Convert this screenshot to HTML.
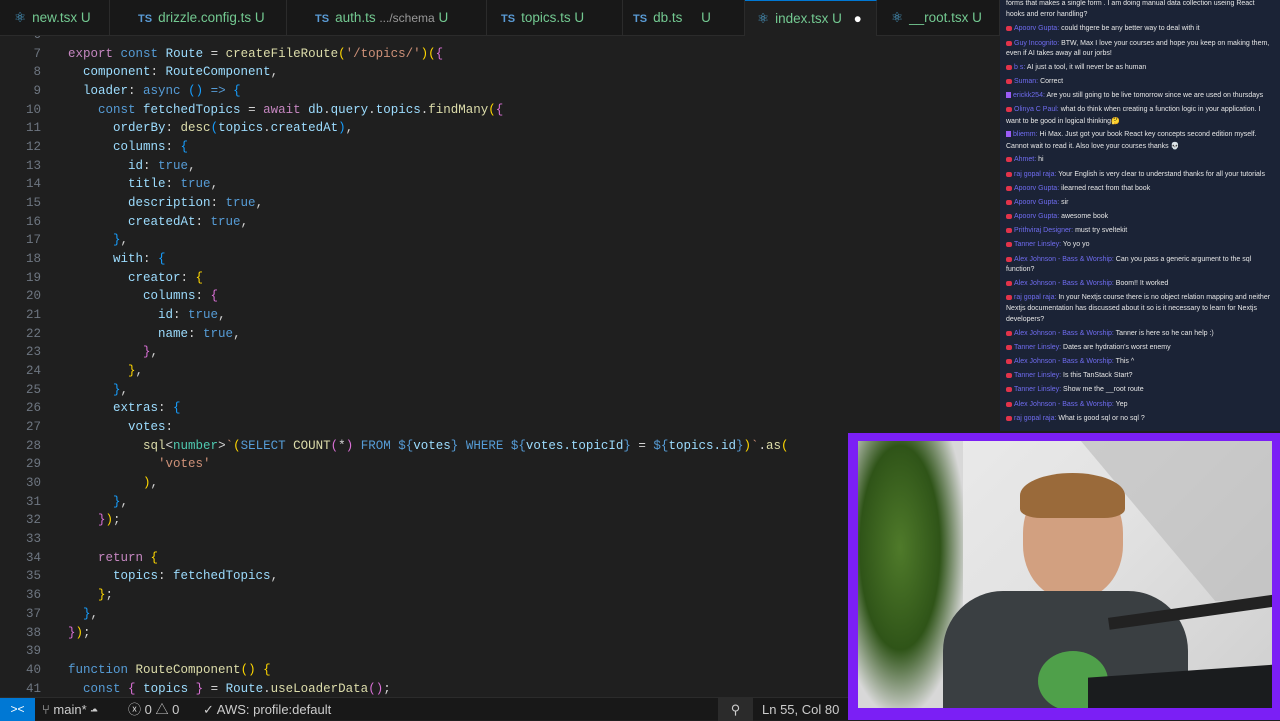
<!DOCTYPE html>
<html><head><meta charset="utf-8"><style>
*{margin:0;padding:0;box-sizing:border-box}
body{width:1280px;height:720px;overflow:hidden;background:#1f1f1f;position:relative;font-family:"Liberation Sans",sans-serif}
.tabs{position:absolute;left:0;top:0;width:1000px;height:36px;background:#181818;border-bottom:1px solid #2b2b2b;z-index:2}
.tab{position:absolute;top:0;height:36px;line-height:36px;font-size:13.5px;color:#73c991;border-right:1px solid #2b2b2b;white-space:nowrap}
.tab .ic{color:#5a9bd5;font-size:11px;margin-right:6px;font-weight:bold}
.tab .r{color:#4fa8d8;margin-right:6px}
.code{position:absolute;left:0;top:26px;width:1000px;font-family:"Liberation Mono",monospace;font-size:12.5px}
.ln{height:18.68px;line-height:18.68px;white-space:pre;position:relative}
.ln .n{position:absolute;left:0;width:41px;text-align:right;color:#6e7681}
.ln .c{position:absolute;left:68px;color:#d4d4d4}
.k{color:#c586c0}.b{color:#569cd6}.f{color:#dcdcaa}.v{color:#9cdcfe}.s{color:#ce9178}.t{color:#4ec9b0}
.p1{color:#ffd700}.p2{color:#da70d6}.p3{color:#179fff}.w{color:#d4d4d4}
.status{position:absolute;left:0;top:697px;width:848px;height:23px;background:#181818;color:#ccc;font-size:13px;line-height:23px;border-top:1px solid #2b2b2b}
.chat{position:absolute;left:1000px;top:0;width:280px;height:431px;background:#1b2336;font-size:7px;color:#e6e6e6}
.cl{position:absolute;left:6px;white-space:nowrap}
.u{color:#6f6cf0}
.dot{display:inline-block;width:6px;height:5px;background:#e0334a;border-radius:2px;margin-right:2px;vertical-align:-1px}
.dp{display:inline-block;width:5px;height:6px;background:#9b5cf6;margin-right:2px;vertical-align:-1px}
.cam{position:absolute;left:848px;top:433px;width:432px;height:287px;background:#7b1ff5}
.img{position:absolute;left:10px;top:8px;width:414px;height:267px;overflow:hidden;background:linear-gradient(135deg,#ececec 0%,#e2e2e2 50%,#cfcfcf 100%)}
</style></head><body>
<div class="tabs">
<div class="tab" style="left:0;width:110px;padding-left:14px"><span class="r">⚛</span>new.tsx U</div>
<div class="tab" style="left:110px;width:177px;padding-left:28px"><span class="ic">TS</span>drizzle.config.ts U</div>
<div class="tab" style="left:287px;width:200px;padding-left:28px"><span class="ic">TS</span>auth.ts <span style="color:#999;font-size:12px">.../schema</span> U</div>
<div class="tab" style="left:487px;width:136px;padding-left:14px"><span class="ic">TS</span>topics.ts U</div>
<div class="tab" style="left:623px;width:122px;padding-left:10px"><span class="ic">TS</span>db.ts &nbsp;&nbsp;&nbsp;&nbsp;U</div>
<div class="tab" style="left:745px;width:132px;padding-left:12px;background:#1f1f1f;border-top:1px solid #0078d4"><span class="r">⚛</span>index.tsx U <span style="color:#fff;margin-left:8px">●</span></div>
<div class="tab" style="left:877px;width:123px;padding-left:14px"><span class="r">⚛</span>__root.tsx U</div>
</div>
<div class="code">
<div class="ln"><span class="n">6</span></div>
<div class="ln"><span class="n">7</span><span class="c"><span class="k">export</span> <span class="b">const</span> <span class="v">Route</span> = <span class="f">createFileRoute</span><span class="p1">(</span><span class="s">'/topics/'</span><span class="p1">)(</span><span class="p2">{</span></span></div>
<div class="ln"><span class="n">8</span><span class="c">  <span class="v">component</span>: <span class="v">RouteComponent</span>,</span></div>
<div class="ln"><span class="n">9</span><span class="c">  <span class="v">loader</span>: <span class="b">async</span> <span class="p3">()</span> <span class="b">=&gt;</span> <span class="p3">{</span></span></div>
<div class="ln"><span class="n">10</span><span class="c">    <span class="b">const</span> <span class="v">fetchedTopics</span> = <span class="k">await</span> <span class="v">db</span>.<span class="v">query</span>.<span class="v">topics</span>.<span class="f">findMany</span><span class="p1">(</span><span class="p2">{</span></span></div>
<div class="ln"><span class="n">11</span><span class="c">      <span class="v">orderBy</span>: <span class="f">desc</span><span class="p3">(</span><span class="v">topics</span>.<span class="v">createdAt</span><span class="p3">)</span>,</span></div>
<div class="ln"><span class="n">12</span><span class="c">      <span class="v">columns</span>: <span class="p3">{</span></span></div>
<div class="ln"><span class="n">13</span><span class="c">        <span class="v">id</span>: <span class="b">true</span>,</span></div>
<div class="ln"><span class="n">14</span><span class="c">        <span class="v">title</span>: <span class="b">true</span>,</span></div>
<div class="ln"><span class="n">15</span><span class="c">        <span class="v">description</span>: <span class="b">true</span>,</span></div>
<div class="ln"><span class="n">16</span><span class="c">        <span class="v">createdAt</span>: <span class="b">true</span>,</span></div>
<div class="ln"><span class="n">17</span><span class="c">      <span class="p3">}</span>,</span></div>
<div class="ln"><span class="n">18</span><span class="c">      <span class="v">with</span>: <span class="p3">{</span></span></div>
<div class="ln"><span class="n">19</span><span class="c">        <span class="v">creator</span>: <span class="p1">{</span></span></div>
<div class="ln"><span class="n">20</span><span class="c">          <span class="v">columns</span>: <span class="p2">{</span></span></div>
<div class="ln"><span class="n">21</span><span class="c">            <span class="v">id</span>: <span class="b">true</span>,</span></div>
<div class="ln"><span class="n">22</span><span class="c">            <span class="v">name</span>: <span class="b">true</span>,</span></div>
<div class="ln"><span class="n">23</span><span class="c">          <span class="p2">}</span>,</span></div>
<div class="ln"><span class="n">24</span><span class="c">        <span class="p1">}</span>,</span></div>
<div class="ln"><span class="n">25</span><span class="c">      <span class="p3">}</span>,</span></div>
<div class="ln"><span class="n">26</span><span class="c">      <span class="v">extras</span>: <span class="p3">{</span></span></div>
<div class="ln"><span class="n">27</span><span class="c">        <span class="v">votes</span>:</span></div>
<div class="ln"><span class="n">28</span><span class="c">          <span class="f">sql</span><span class="w">&lt;</span><span class="t">number</span><span class="w">&gt;</span><span class="s">`</span><span class="p1">(</span><span class="b">SELECT</span> <span class="f">COUNT</span><span class="p2">(</span>*<span class="p2">)</span> <span class="b">FROM</span> <span class="b">${</span><span class="v">votes</span><span class="b">}</span> <span class="b">WHERE</span> <span class="b">${</span><span class="v">votes.topicId</span><span class="b">}</span> = <span class="b">${</span><span class="v">topics.id</span><span class="b">}</span><span class="p1">)</span><span class="s">`</span>.<span class="f">as</span><span class="p1">(</span></span></div>
<div class="ln"><span class="n">29</span><span class="c">            <span class="s">'votes'</span></span></div>
<div class="ln"><span class="n">30</span><span class="c">          <span class="p1">)</span>,</span></div>
<div class="ln"><span class="n">31</span><span class="c">      <span class="p3">}</span>,</span></div>
<div class="ln"><span class="n">32</span><span class="c">    <span class="p2">}</span><span class="p1">)</span>;</span></div>
<div class="ln"><span class="n">33</span></div>
<div class="ln"><span class="n">34</span><span class="c">    <span class="k">return</span> <span class="p1">{</span></span></div>
<div class="ln"><span class="n">35</span><span class="c">      <span class="v">topics</span>: <span class="v">fetchedTopics</span>,</span></div>
<div class="ln"><span class="n">36</span><span class="c">    <span class="p1">}</span>;</span></div>
<div class="ln"><span class="n">37</span><span class="c">  <span class="p3">}</span>,</span></div>
<div class="ln"><span class="n">38</span><span class="c"><span class="p2">}</span><span class="p1">)</span>;</span></div>
<div class="ln"><span class="n">39</span></div>
<div class="ln"><span class="n">40</span><span class="c"><span class="b">function</span> <span class="f">RouteComponent</span><span class="p1">()</span> <span class="p1">{</span></span></div>
<div class="ln"><span class="n">41</span><span class="c">  <span class="b">const</span> <span class="p2">{</span> <span class="v">topics</span> <span class="p2">}</span> = <span class="v">Route</span>.<span class="f">useLoaderData</span><span class="p2">()</span>;</span></div>
</div>
<div class="status">
<div style="position:absolute;left:0;top:0;width:35px;height:23px;background:#0078d4;color:#fff;text-align:center;font-size:12px">&gt;&lt;</div>
<span style="position:absolute;left:42px">⑂ main* ☁</span>
<span style="position:absolute;left:128px">ⓧ 0 △ 0</span>
<span style="position:absolute;left:203px">✓ AWS: profile:default</span>
<div style="position:absolute;left:718px;top:0;width:35px;height:23px;background:#2b2b2b;text-align:center">⚲</div>
<span style="position:absolute;left:762px">Ln 55, Col 80</span>
</div>
<div class="chat">
<div class="cl" style="top:0">forms that makes a single form . I am doing manual data collection useing React</div>
<div class="cl" style="top:11px">hooks and error handling?</div>
<div class="cl" style="top:25px"><span class="dot"></span><span class="u">Apoorv Gupta:</span> could thgere be any better way to deal with it</div>
<div class="cl" style="top:40px"><span class="dot"></span><span class="u">Guy Incognito:</span> BTW, Max I love your courses and hope you keep on making them,</div>
<div class="cl" style="top:50px">even if AI takes away all our jorbs!</div>
<div class="cl" style="top:64px"><span class="dot"></span><span class="u">b s:</span> AI just a tool, it will never be as human</div>
<div class="cl" style="top:78px"><span class="dot"></span><span class="u">Suman:</span> Correct</div>
<div class="cl" style="top:92px"><span class="dp"></span><span class="u">erickk254:</span> Are you still going to be live tomorrow since we are used on thursdays</div>
<div class="cl" style="top:106px"><span class="dot"></span><span class="u">Olinya C Paul:</span> what do think when creating a function logic in your application. I</div>
<div class="cl" style="top:117px">want to be good in logical thinking🤔</div>
<div class="cl" style="top:131px"><span class="dp"></span><span class="u">bliemm:</span> Hi Max. Just got your book React key concepts second edition myself.</div>
<div class="cl" style="top:142px">Cannot wait to read it. Also love your courses thanks 💀</div>
<div class="cl" style="top:156px"><span class="dot"></span><span class="u">Ahmet:</span> hi</div>
<div class="cl" style="top:171px"><span class="dot"></span><span class="u">raj gopal raja:</span> Your English is very clear to understand thanks for all your tutorials</div>
<div class="cl" style="top:185px"><span class="dot"></span><span class="u">Apoorv Gupta:</span> ilearned react from that book</div>
<div class="cl" style="top:199px"><span class="dot"></span><span class="u">Apoorv Gupta:</span> sir</div>
<div class="cl" style="top:213px"><span class="dot"></span><span class="u">Apoorv Gupta:</span> awesome book</div>
<div class="cl" style="top:227px"><span class="dot"></span><span class="u">Prithviraj Designer:</span> must try sveltekit</div>
<div class="cl" style="top:241px"><span class="dot"></span><span class="u">Tanner Linsley:</span> Yo yo yo</div>
<div class="cl" style="top:256px"><span class="dot"></span><span class="u">Alex Johnson - Bass &amp; Worship:</span> Can you pass a generic argument to the sql</div>
<div class="cl" style="top:266px">function?</div>
<div class="cl" style="top:280px"><span class="dot"></span><span class="u">Alex Johnson - Bass &amp; Worship:</span> Boom!! It worked</div>
<div class="cl" style="top:294px"><span class="dot"></span><span class="u">raj gopal raja:</span> In your Nextjs course there is no object relation mapping and neither</div>
<div class="cl" style="top:305px">Nextjs documentation has discussed about it so is it necessary to learn for Nextjs</div>
<div class="cl" style="top:316px">developers?</div>
<div class="cl" style="top:330px"><span class="dot"></span><span class="u">Alex Johnson - Bass &amp; Worship:</span> Tanner is here so he can help :)</div>
<div class="cl" style="top:344px"><span class="dot"></span><span class="u">Tanner Linsley:</span> Dates are hydration's worst enemy</div>
<div class="cl" style="top:358px"><span class="dot"></span><span class="u">Alex Johnson - Bass &amp; Worship:</span> This ^</div>
<div class="cl" style="top:372px"><span class="dot"></span><span class="u">Tanner Linsley:</span> Is this TanStack Start?</div>
<div class="cl" style="top:386px"><span class="dot"></span><span class="u">Tanner Linsley:</span> Show me the __root route</div>
<div class="cl" style="top:401px"><span class="dot"></span><span class="u">Alex Johnson - Bass &amp; Worship:</span> Yep</div>
<div class="cl" style="top:415px"><span class="dot"></span><span class="u">raj gopal raja:</span> What is good sql or no sql ?</div>
</div>
<div class="cam"><div class="img">
<div style="position:absolute;left:290px;top:0;width:200px;height:160px;background:#b9b9b9;transform:skewX(40deg);opacity:.6"></div>
<div style="position:absolute;left:0;top:0;width:105px;height:267px;background:radial-gradient(ellipse at 40% 40%,#4f7a2a 0%,#2f5418 45%,#d8d8d8 75%)"></div>
<div style="position:absolute;left:165px;top:38px;width:100px;height:120px;border-radius:45%;background:#d2a080"></div>
<div style="position:absolute;left:162px;top:32px;width:105px;height:45px;border-radius:50% 50% 20% 20%;background:#9a6a3a"></div>
<div style="position:absolute;left:85px;top:150px;width:245px;height:140px;border-radius:60px 60px 0 0;background:#3a3f42"></div>
<div style="position:absolute;left:180px;top:210px;width:70px;height:60px;border-radius:50%;background:#4fa04a"></div>
<div style="position:absolute;left:230px;top:230px;width:190px;height:45px;background:#1a1c1e;transform:skewY(-4deg)"></div>
<div style="position:absolute;left:250px;top:165px;width:170px;height:12px;background:#222;transform:rotate(-8deg)"></div>
</div></div>
</body></html>
